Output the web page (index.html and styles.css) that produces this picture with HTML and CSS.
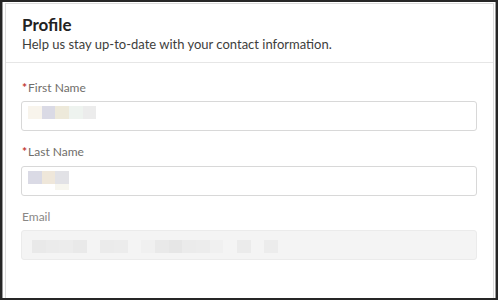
FILE: index.html
```html
<!DOCTYPE html>
<html lang="en">
<head>
<meta charset="utf-8">
<title>Profile</title>
<link rel="stylesheet" href="styles.css">
</head>
<body>
<div class="frame">
  <div class="card">
    <div class="card-header">
      <h1 class="title">Profile</h1>
      <p class="subtitle">Help us stay up-to-date with your contact information.</p>
    </div>
    <div class="card-body">
      <div class="field">
        <label class="label"><abbr class="req">*</abbr>First Name</label>
        <div class="input">
          <div class="pix">
            <span class="px c1"></span><span class="px c2"></span><span class="px c3"></span><span class="px c4"></span><span class="px c5"></span>
          </div>
        </div>
      </div>
      <div class="field">
        <label class="label"><abbr class="req">*</abbr>Last Name</label>
        <div class="input">
          <div class="pix">
            <span class="px c2"></span><span class="px c6"></span><span class="px c7 tail"></span>
          </div>
        </div>
      </div>
      <div class="field">
        <label class="label plain">Email</label>
        <div class="input disabled">
          <div class="pix">
            <span class="px g1"></span><span class="px g2"></span><span class="px g3"></span><span class="px g1"></span><span class="px"></span><span class="px g2"></span><span class="px g3"></span><span class="px"></span><span class="px g4"></span><span class="px g1"></span><span class="px g0"></span><span class="px g2"></span><span class="px g3"></span><span class="px g4"></span><span class="px"></span><span class="px g2"></span><span class="px"></span><span class="px g3"></span>
          </div>
        </div>
      </div>
    </div>
  </div>
</div>
</body>
</html>
```
FILE: styles.css
```css
html, body {
  margin: 0;
  padding: 0;
  background: #ffffff;
}
body {
  width: 498px;
  height: 300px;
  overflow: hidden;
  font-family: Lato, "Noto Sans", "Liberation Sans", sans-serif;
}
.frame {
  box-sizing: border-box;
  width: 498px;
  height: 300px;
  border: 2px solid #262626;
  padding: 1px 2px 0 3px;
  overflow: hidden;
  background: #ffffff;
  box-shadow: inset 1px 0 0 #9a9a9a, inset -1px 0 0 #9a9a9a;
}
.card {
  border: 1px solid #dcdcdc;
  border-bottom: none;
  height: 100%;
  box-sizing: border-box;
  background: #fff;
}
.card-header {
  padding: 11px 16px 9px 16px;
  border-bottom: 1px solid #e6e6e6;
}
.title {
  margin: 0;
  font-size: 17px;
  font-weight: 700;
  line-height: 1.2;
  color: #222222;
}
.subtitle {
  margin: 2px 0 0 0;
  font-size: 13px;
  line-height: 1.2;
  color: #3e3e3c;
}
.card-body {
  padding: 18px 16px 0 15px;
}
.field {
  display: flex;
  flex-direction: column;
  margin-bottom: 14px;
}
.label {
  font-size: 12px;
  line-height: 1.2;
  color: #706e6b;
  margin-bottom: 6px;
  padding-left: 1px;
}
.label.plain {
  color: #8a8886;
}
.req {
  color: #c23934;
  font-weight: 700;
  text-decoration: none;
  border: none;
  margin-right: 1px;
}
.input {
  box-sizing: border-box;
  height: 30px;
  border: 1px solid #d8d8d8;
  border-radius: 3px;
  padding: 4px 6px;
  background: #fff;
}
.input.disabled {
  background: #f4f4f4;
  border-color: #ebebeb;
  padding: 9px 10px;
}
.pix {
  display: flex;
  align-items: flex-start;
}
.px {
  width: 13.67px;
  height: 13px;
  flex: none;
  position: relative;
}
.c1 { background: #f8f4ec; }
.c2 { background: #dadae5; }
.c3 { background: #ede9da; }
.c4 { background: #eef3ef; }
.c5 { background: #ececec; }
.c6 { background: #efe7da; }
.c7 { background: #e2e2e6; }
.tail::after {
  content: "";
  position: absolute;
  left: 0;
  top: 13px;
  width: 13.67px;
  height: 6px;
  background: #f7f6ef;
}
.g0 { background: #e6e6e6; }
.g1 { background: #e9e9e9; }
.g2 { background: #ebebeb; }
.g3 { background: #ececec; }
.g4 { background: #f0f0f0; }
```
